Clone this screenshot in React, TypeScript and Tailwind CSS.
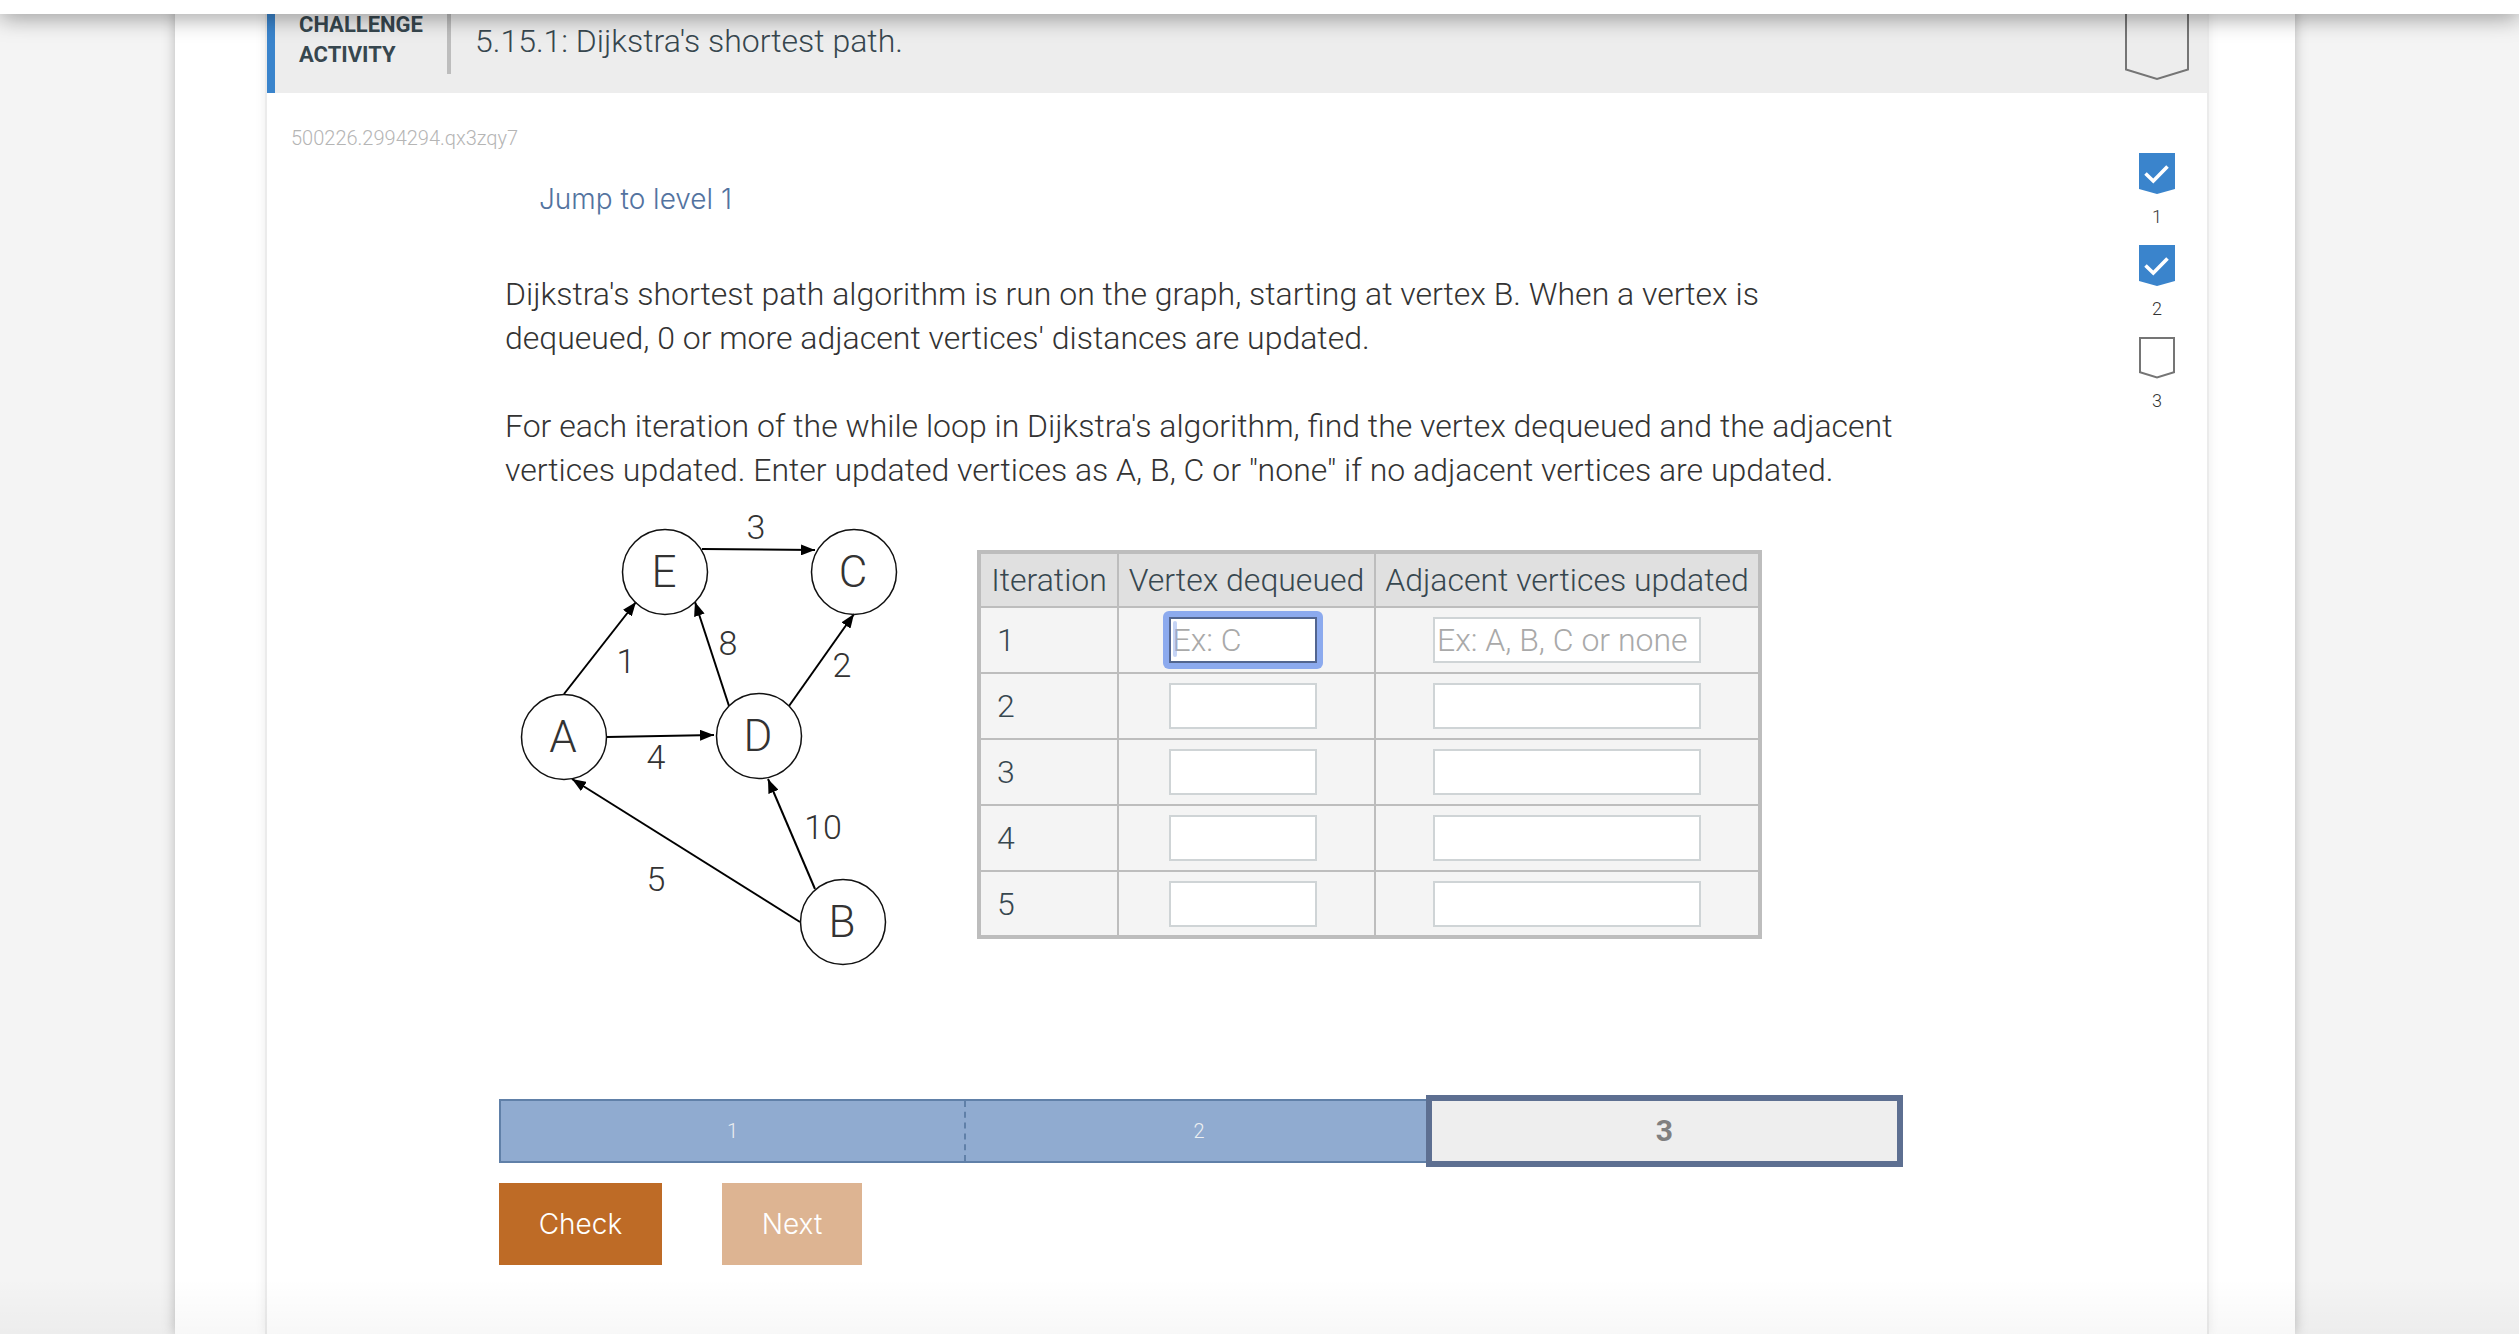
import React, { useState } from 'react';

type GraphNode = { id: string; cx: number; cy: number };
type GraphEdge = { from: [number, number]; to: [number, number]; weight: number; label: [number, number] };

const nodes: GraphNode[] = [
    { id: 'E', cx: 166, cy: 80 },
    { id: 'C', cx: 355, cy: 80 },
    { id: 'A', cx: 65, cy: 245 },
    { id: 'D', cx: 260, cy: 244 },
    { id: 'B', cx: 344, cy: 430 },
];

const edges: GraphEdge[] = [
    { from: [203, 57], to: [316, 58], weight: 3, label: [257, 47] },
    { from: [65, 202], to: [137, 110], weight: 1, label: [127, 181] },
    { from: [230, 214], to: [196, 110], weight: 8, label: [229, 163] },
    { from: [290, 214], to: [355, 122], weight: 2, label: [343, 185] },
    { from: [108, 245], to: [215, 243], weight: 4, label: [157, 277] },
    { from: [316, 397], to: [269, 287], weight: 10, label: [324, 347] },
    { from: [301, 430], to: [73, 287], weight: 5, label: [157, 399] },
];

const levels = [
    { id: 1, done: true },
    { id: 2, done: true },
    { id: 3, done: false },
];

const placeholders = { dequeued: 'Ex: C', updated: 'Ex: A, B, C or none' };

const Graph = () => (
    <svg viewBox="0 0 420 490" className="w-[420px] h-[490px] shrink-0" role="img" aria-label="Weighted directed graph">
        <defs>
            <marker id="arrow" markerUnits="userSpaceOnUse" markerWidth="14" markerHeight="11" refX="14" refY="5.5" orient="auto">
                <path d="M0 0 L14 5.5 L0 11 Z" fill="#000" />
            </marker>
        </defs>
        {edges.map((edge) => (
            <g key={edge.weight}>
                <line
                    x1={edge.from[0]}
                    y1={edge.from[1]}
                    x2={edge.to[0]}
                    y2={edge.to[1]}
                    stroke="#000"
                    strokeWidth="2"
                    markerEnd="url(#arrow)"
                />
                <text x={edge.label[0]} y={edge.label[1]} textAnchor="middle" className="text-[34px] font-light fill-[#333]">
                    {edge.weight}
                </text>
            </g>
        ))}
        {nodes.map((node) => (
            <g key={node.id}>
                <circle cx={node.cx} cy={node.cy} r="42.5" fill="none" stroke="#111" strokeWidth="1.5" />
                <text x={node.cx - 1} y={node.cy + 15} textAnchor="middle" className="text-[44px] font-light fill-[#333]">
                    {node.id}
                </text>
            </g>
        ))}
    </svg>
);

const LevelBadge = ({ done }: { done: boolean }) => (
    <svg viewBox="0 0 36 42" className="w-9 h-[42px]">
        {done ? (
            <>
                <path d="M0 0 H36 V36 L18 41 L0 36 Z" fill="#3a84cc" />
                <path d="M6.5 20.5 L14.3 28 L28.5 13.5" fill="none" stroke="#fff" strokeWidth="3.6" />
            </>
        ) : (
            <path d="M1 1 H35 V35.3 L18 40.5 L1 35.3 Z" fill="#fff" stroke="#757575" strokeWidth="2" />
        )}
    </svg>
);

const AnswerTable = () => {
    const [answers, setAnswers] = useState(Array.from({ length: 5 }, () => ({ dequeued: '', updated: '' })));

    const update = (row: number, field: 'dequeued' | 'updated', value: string) => {
        setAnswers((prev) => prev.map((a, idx) => (idx === row ? { ...a, [field]: value } : a)));
    };

    const inputBase = 'block h-[46px] px-0.5 border-2 bg-white font-light outline-none placeholder:text-[#a9a9a9]';

    return (
        <table className="border-collapse border-4 border-[#bdbdbd] text-[32px] leading-10 font-light text-[#37474f]">
            <thead>
                <tr className="bg-[#e0e0e0] h-[55px]">
                    <th className="border-2 border-[#bdbdbd] w-[139px] font-light whitespace-nowrap">Iteration</th>
                    <th className="border-2 border-[#bdbdbd] w-[257px] font-light whitespace-nowrap">Vertex dequeued</th>
                    <th className="border-2 border-[#bdbdbd] w-[385px] font-light whitespace-nowrap">Adjacent vertices updated</th>
                </tr>
            </thead>
            <tbody>
                {answers.map((answer, idx) => (
                    <tr key={idx} className="bg-[#f4f4f4] h-[66px]">
                        <td className="border-2 border-[#bdbdbd] pl-4">{idx + 1}</td>
                        <td className="border-2 border-[#bdbdbd] pr-2">
                            {/* First answer carries the focus ring and caret */}
                            <div className={`relative mx-auto ${idx === 0 ? 'w-40 p-1.5 rounded-md bg-[#8caaee]' : 'w-[148px]'}`}>
                                <input
                                    type="text"
                                    aria-label={`Vertex dequeued, iteration ${idx + 1}`}
                                    placeholder={idx === 0 ? placeholders.dequeued : undefined}
                                    value={answer.dequeued}
                                    onChange={(e) => update(idx, 'dequeued', e.target.value)}
                                    className={`${inputBase} w-full ${idx === 0 ? 'border-[#52658f]' : 'border-[#cfd4d6]'}`}
                                />
                                {idx === 0 && <span className="absolute left-2.5 top-2.5 w-1 h-9 rounded-sm bg-[#8caaee]/50" />}
                            </div>
                        </td>
                        <td className="border-2 border-[#bdbdbd]">
                            <input
                                type="text"
                                aria-label={`Adjacent vertices updated, iteration ${idx + 1}`}
                                placeholder={idx === 0 ? placeholders.updated : undefined}
                                value={answer.updated}
                                onChange={(e) => update(idx, 'updated', e.target.value)}
                                className={`${inputBase} w-[268px] mx-auto border-[#cfd4d6]`}
                            />
                        </td>
                    </tr>
                ))}
            </tbody>
        </table>
    );
};

const ProgressBar = () => (
    <div className="grid grid-cols-3 h-16 border-2 border-[#6080a8] bg-[#90abd0] text-xl text-[#eceff1] font-light">
        <div className="flex items-center justify-center border-r-2 border-dashed border-[#6080a8]">1</div>
        <div className="flex items-center justify-center">2</div>
        <div className="flex items-center justify-center bg-[#eeeeee] ring-6 ring-[#5d6f91] text-[30px] font-bold text-[#808080]">3</div>
    </div>
);

const App = () => {
    return (
        <div className="relative min-h-screen flex flex-col overflow-hidden bg-[#f4f4f4] font-['Roboto',sans-serif] text-[#333]">
            {/* Bottom edge of the site header */}
            <div className="absolute inset-x-0 top-0 z-10 h-3.5 bg-white shadow-[0_0_24px_rgba(0,0,0,0.6)]" />

            <main className="flex-1 flex ml-[175px] mr-[224px] bg-white shadow-[0_0_12px_rgba(0,0,0,0.25)]">
                <section className="flex-1 ml-[90px] mr-[86px] border-x-2 border-[#ebebeb] pb-16 shadow-[0_0_10px_rgba(0,0,0,0.08)]">
                    {/* Activity header */}
                    <header className="flex items-start h-[93px] bg-[#ededed] border-l-8 border-[#3a84cc] text-[#37474f]">
                        <div className="h-[74px] pt-2.5 px-6 border-r-4 border-[#bdbdbd] text-[22px] leading-[30px] font-bold">
                            CHALLENGE
                            <br />
                            ACTIVITY
                        </div>
                        <h1 className="pl-6 pt-[21px] text-[32px] leading-10 font-light">5.15.1: Dijkstra's shortest path.</h1>
                        <svg viewBox="0 0 64 81" className="w-16 h-[81px] ml-auto mr-[18px]">
                            <path d="M1 -2 V69.5 L32 79 L63 69.5 V-2" fill="none" stroke="#757575" strokeWidth="2" />
                        </svg>
                    </header>

                    <p className="pt-[31px] pl-6 text-xl leading-7 font-light text-[#b5b5b5]">500226.2994294.qx3zqy7</p>

                    <div className="flex">
                        <div className="w-[1400px] ml-[232px] pt-[27px]">
                            <a href="#level-1" className="block w-fit ml-10 text-[28px] leading-10 font-light font-['Inter',sans-serif] text-[#53739f]">
                                Jump to level 1
                            </a>

                            {/* Question */}
                            <div className="mt-[53px] pl-1.5 pr-1 text-[32px] leading-11 font-light space-y-11">
                                <p>
                                    Dijkstra's shortest path algorithm is run on the graph, starting at vertex B. When a vertex is
                                    dequeued, 0 or more adjacent vertices' distances are updated.
                                </p>
                                <p>
                                    For each iteration of the while loop in Dijkstra's algorithm, find the vertex dequeued and the adjacent
                                    vertices updated. Enter updated vertices as A, B, C or "none" if no adjacent vertices are updated.
                                </p>
                            </div>

                            <div className="flex items-start">
                                <Graph />
                                <div className="ml-[58px] mt-[58px]">
                                    <AnswerTable />
                                </div>
                            </div>

                            <div className="mt-[117px]">
                                <ProgressBar />
                            </div>

                            <div className="flex gap-[60px] mt-5 font-['Inter',sans-serif] text-[28px] leading-[42px]">
                                <button type="button" className="w-[163px] py-5 bg-[#be6b26] text-white font-light">Check</button>
                                <button type="button" className="w-[140px] py-5 bg-[#ddb492] text-white font-light" disabled>Next</button>
                            </div>
                        </div>

                        {/* Level badges */}
                        <ol className="ml-auto mr-8 pt-px flex flex-col gap-4">
                            {levels.map((level) => (
                                <li key={level.id} className="flex flex-col items-center gap-2.5">
                                    <LevelBadge done={level.done} />
                                    <span className="text-lg leading-6 font-light text-[#333]">{level.id}</span>
                                </li>
                            ))}
                        </ol>
                    </div>
                </section>
            </main>

            <div className="absolute inset-x-0 bottom-0 h-14 pointer-events-none bg-linear-to-b from-transparent to-black/3" />
        </div>
    );
};

export default App;
